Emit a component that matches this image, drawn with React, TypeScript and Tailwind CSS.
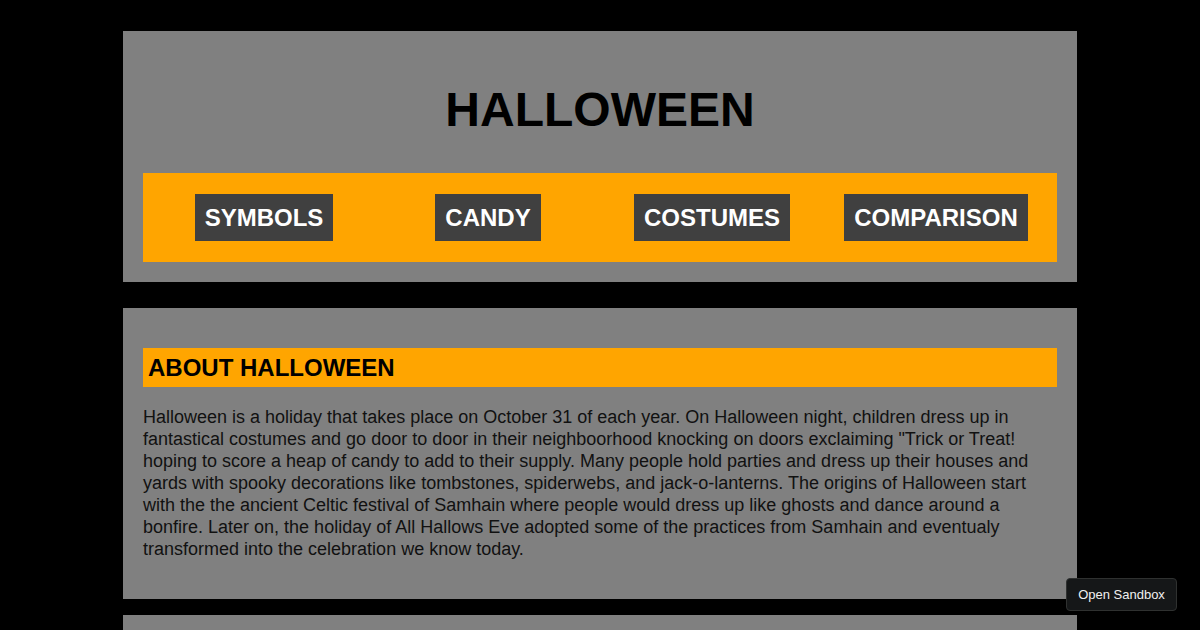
export default function App() {
  const links = ["SYMBOLS", "CANDY", "COSTUMES", "COMPARISON"];

  return (
    <div className="min-h-screen bg-black pt-[31px] pb-10 font-['Liberation_Sans',Arial,sans-serif]">
      <header className="mx-auto w-[954px] bg-[#808080] p-5">
        <h1 className="mt-[31px] mb-[36px] text-center text-[48px] font-bold leading-[55px] text-black">
          HALLOWEEN
        </h1>
        <nav className="grid grid-cols-4 bg-[#ffa500] px-[9px] py-[21px]">
          {links.map((link) => (
            <div key={link} className="flex justify-center">
              <a
                href="#"
                className="bg-[#404040] px-[10px] py-[9px] text-[24px] font-bold leading-[29px] text-white"
              >
                {link}
              </a>
            </div>
          ))}
        </nav>
      </header>

      <section className="mx-auto mt-[26px] w-[954px] bg-[#808080] p-5">
        <h2 className="mt-5 bg-[#ffa500] px-[5px] py-[6px] text-[24px] font-bold leading-[27px] text-black">
          ABOUT HALLOWEEN
        </h2>
        <p className="mt-[19px] mb-[19px] text-[18px] leading-[22px] text-[#111]">
          Halloween is a holiday that takes place on October 31 of each year. On Halloween night, children dress up in
          fantastical costumes and go door to door in their neighboorhood knocking on doors exclaiming "Trick or Treat!
          hoping to score a heap of candy to add to their supply. Many people hold parties and dress up their houses and
          yards with spooky decorations like tombstones, spiderwebs, and jack-o-lanterns. The origins of Halloween start
          with the the ancient Celtic festival of Samhain where people would dress up like ghosts and dance around a
          bonfire. Later on, the holiday of All Hallows Eve adopted some of the practices from Samhain and eventualy
          transformed into the celebration we know today.
        </p>
      </section>

      <section className="mx-auto mt-4 h-[200px] w-[954px] bg-[#808080] p-5" />

      <a
        href="#"
        className="fixed right-[23px] bottom-[19px] flex h-[33px] w-[111px] items-center justify-center rounded-[4px] border border-[#2f3130] bg-[#151718] text-[13px] text-[#f0f0f0]"
      >
        Open Sandbox
      </a>
    </div>
  );
}
